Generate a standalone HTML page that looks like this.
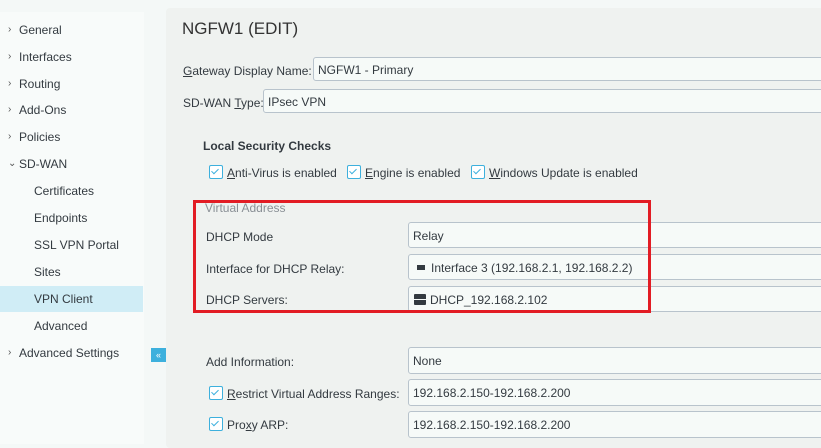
<!DOCTYPE html><html><head><style>
body{margin:0;width:821px;height:444px;background:#f4f8f7;font-family:"Liberation Sans","DejaVu Sans",sans-serif;font-size:12px;color:#333a40;position:relative;overflow:hidden}
.a{position:absolute}
.side{left:0;top:12px;width:144px;height:432px;background:#f8fbfa}
.nav{left:0;width:143px;height:26px;line-height:26px}
.nav .c{position:absolute;left:8px;font-size:10px;color:#555}
.panel{left:166px;top:8px;width:660px;height:440px;background:#eff2f0;border-radius:4px}
.f{background:#f6faf8;border:1px solid #b8c3cc;border-radius:3px;height:24px;line-height:24px;padding-left:4px;box-sizing:border-box;right:-5px}
.cb{width:12px;height:12px;border:1px solid #3db0dd;border-radius:2px;background:#fff;display:inline-block;vertical-align:-2px;margin-right:4px;position:relative}
.cb:after{content:"";position:absolute;left:3px;top:1px;width:3px;height:6px;border:solid #3db0dd;border-width:0 1.5px 1.5px 0;transform:rotate(45deg)}
u{text-decoration:underline}
</style></head><body>
<div class="a side"></div>
<div class="a nav" style="top:17px"><span class="c">›</span><span style="margin-left:19px">General</span></div>
<div class="a nav" style="top:44px"><span class="c">›</span><span style="margin-left:19px">Interfaces</span></div>
<div class="a nav" style="top:71px"><span class="c">›</span><span style="margin-left:19px">Routing</span></div>
<div class="a nav" style="top:97px"><span class="c">›</span><span style="margin-left:19px">Add-Ons</span></div>
<div class="a nav" style="top:124px"><span class="c">›</span><span style="margin-left:19px">Policies</span></div>
<div class="a nav" style="top:151px"><span class="c">⌄</span><span style="margin-left:19px">SD-WAN</span></div>
<div class="a nav" style="top:178px"><span style="margin-left:34px">Certificates</span></div>
<div class="a nav" style="top:205px"><span style="margin-left:34px">Endpoints</span></div>
<div class="a nav" style="top:232px"><span style="margin-left:34px">SSL VPN Portal</span></div>
<div class="a nav" style="top:259px"><span style="margin-left:34px">Sites</span></div>
<div class="a nav" style="top:286px;background:#d0edf6"><span style="margin-left:34px">VPN Client</span></div>
<div class="a nav" style="top:313px"><span style="margin-left:34px">Advanced</span></div>
<div class="a nav" style="top:340px"><span class="c">›</span><span style="margin-left:19px">Advanced Settings</span></div>
<div class="a" style="left:151px;top:348px;width:15px;height:14px;background:#3db0dd;color:#fff;font-size:9px;line-height:14px;text-align:center">«</div>
<div class="a panel"></div>
<div class="a" style="left:182px;top:19px;font-size:17px;color:#333">NGFW1 (EDIT)</div>
<div class="a" style="left:183px;top:64px"><u>G</u>ateway Display Name:</div>
<div class="a f" style="left:313px;top:57px;width:520px">NGFW1 - Primary</div>
<div class="a" style="left:183px;top:96px">SD-WAN <u>T</u>ype:</div>
<div class="a f" style="left:263px;top:89px;width:570px">IPsec VPN</div>
<div class="a" style="left:203px;top:139px;font-weight:bold">Local Security Checks</div>
<div class="a" style="left:209px;top:165px"><span class="cb"></span><u>A</u>nti-Virus is enabled</div>
<div class="a" style="left:347px;top:165px"><span class="cb"></span><u>E</u>ngine is enabled</div>
<div class="a" style="left:471px;top:165px"><span class="cb"></span><u>W</u>indows Update is enabled</div>
<div class="a" style="left:205px;top:201px;color:#8a9096">Virtual Address</div>
<div class="a" style="left:206px;top:230px">DHCP Mode</div>
<div class="a f" style="left:408px;top:222px;width:425px;height:26px;line-height:26px">Relay</div>
<div class="a" style="left:206px;top:262px">Interface for DHCP Relay:</div>
<div class="a f" style="left:408px;top:254px;width:425px;height:26px;line-height:26px;padding-left:8px"><span style="display:inline-block;width:8px;height:5px;background:#333a40;margin-right:6px;vertical-align:2px"></span>Interface 3 (192.168.2.1, 192.168.2.2)</div>
<div class="a" style="left:206px;top:293px">DHCP Servers:</div>
<div class="a f" style="left:408px;top:286px;width:425px;height:26px;line-height:26px;padding-left:5px"><span style="display:inline-block;width:12px;height:11px;background:linear-gradient(#333a40 0 45%,transparent 45% 55%,#333a40 55%);border-radius:1px;margin-right:4px;vertical-align:-1px"></span>DHCP_192.168.2.102</div>
<div class="a" style="left:193px;top:200px;width:452px;height:107px;border:3px solid #e21c24"></div>
<div class="a" style="left:206px;top:355px">Add Information:</div>
<div class="a f" style="left:408px;top:347px;width:425px;height:27px;line-height:27px">None</div>
<div class="a" style="left:209px;top:386px"><span class="cb"></span><u>R</u>estrict Virtual Address Ranges:</div>
<div class="a f" style="left:408px;top:379px;width:425px;height:27px;line-height:27px">192.168.2.150-192.168.2.200</div>
<div class="a" style="left:209px;top:417px"><span class="cb"></span>Pro<u>x</u>y ARP:</div>
<div class="a f" style="left:408px;top:411px;width:425px;height:27px;line-height:27px">192.168.2.150-192.168.2.200</div>
</body></html>
